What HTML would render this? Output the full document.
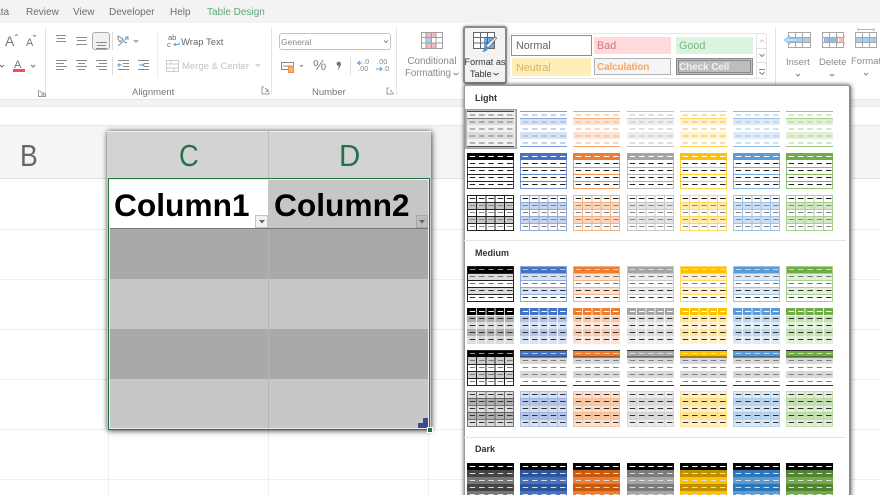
<!DOCTYPE html>
<html lang="en"><head><meta charset="utf-8"><title>Format as Table</title>
<style>
html,body{margin:0;padding:0;width:880px;height:495px;overflow:hidden;background:#fff;font-family:"Liberation Sans",sans-serif}
#p{position:relative;width:880px;height:495px;overflow:hidden;filter:blur(.35px)}
.a{position:absolute}
.t{position:absolute;white-space:nowrap;font-size:9.5px;line-height:12px;color:#6f6f6f}
.c{text-align:center}
svg{position:absolute;overflow:visible}
.k0{--c:#000;--f:#777;--d:#777;--a:#dcdcdc;--b:#b0b0b0;--e:#444;--m:#777;--g:#222;--h:#999}
.k1{--c:#4472c4;--f:#8eaadb;--d:#8ea9db;--a:#d9e2f3;--b:#b4c6e7;--e:#2f5597;--m:#4472c4;--g:#8eaadb;--h:#b4c6e7}
.k2{--c:#ed7d31;--f:#f4b183;--d:#f4b183;--a:#fbe4d5;--b:#f7caac;--e:#c55a11;--m:#ed7d31;--g:#f4b183;--h:#f7caac}
.k3{--c:#a5a5a5;--f:#c9c9c9;--d:#c0c0c0;--a:#ededed;--b:#dbdbdb;--e:#7b7b7b;--m:#a5a5a5;--g:#c9c9c9;--h:#dbdbdb}
.k4{--c:#ffc000;--f:#ffd966;--d:#e3c060;--a:#fff2cc;--b:#ffe599;--e:#bf9000;--m:#ffc000;--g:#ffd966;--h:#ffe599}
.k5{--c:#5b9bd5;--f:#9dc3e6;--d:#9dc3e6;--a:#deeaf6;--b:#bdd6ee;--e:#2e75b6;--m:#5b9bd5;--g:#9dc3e6;--h:#bdd6ee}
.k6{--c:#70ad47;--f:#a9d18e;--d:#a9d18e;--a:#e2efd9;--b:#c5e0b3;--e:#548235;--m:#70ad47;--g:#a9d18e;--h:#c5e0b3}
.dh{stroke-dasharray:5.5 3.83;stroke-width:1;fill:none}
</style></head><body><div id="p">

<!-- tab bar and ribbon -->
<div class="a" style="left:0;top:0;width:880px;height:23px;background:#f3f3f3"></div>
<div class="t" style="left:-12px;top:7px;font-size:10px">Data</div>
<div class="t" style="left:26px;top:7px;font-size:10px">Review</div>
<div class="t" style="left:73px;top:7px;font-size:10px">View</div>
<div class="t" style="left:109px;top:7px;font-size:10px">Developer</div>
<div class="t" style="left:170px;top:7px;font-size:10px">Help</div>
<div class="t" style="left:207px;top:7px;font-size:10px;color:#5fa67f">Table Design</div>
<div class="a" style="left:0;top:99px;width:880px;height:7px;background:#f3f3f3;border-top:1px solid #e6e6e6;box-sizing:border-box"></div>
<div class="a" style="left:0;top:106px;width:880px;height:1px;background:#ececec"></div>

<!-- separators -->
<div class="a" style="left:45px;top:27px;width:1px;height:68px;background:#e4e4e4"></div>
<div class="a" style="left:157px;top:32px;width:1px;height:46px;background:#ececec"></div>
<div class="a" style="left:271px;top:27px;width:1px;height:68px;background:#e4e4e4"></div>
<div class="a" style="left:396px;top:27px;width:1px;height:68px;background:#e4e4e4"></div>
<div class="a" style="left:775px;top:27px;width:1px;height:60px;background:#e4e4e4"></div>
<div class="a" style="left:112px;top:32px;width:1px;height:18px;background:#ddd"></div>
<div class="a" style="left:112px;top:57px;width:1px;height:18px;background:#ddd"></div>
<div class="a" style="left:350px;top:57px;width:1px;height:18px;background:#ddd"></div>

<!-- font group -->
<div class="t" style="left:5px;top:34px;font-size:14px;line-height:15px;color:#777">A</div>
<div class="t" style="left:26px;top:37px;font-size:11px;color:#777">A</div>
<svg style="left:0;top:0" width="60" height="90" fill="none" stroke-width="1">
<path d="M15 36l1.500-1.500 1.500 1.500" stroke="#7a9cc0"/><path d="M33 35l1.500 1.500 1.500-1.500" stroke="#7a9cc0"/>
<path d="M0 65l2 2 2-2M31 65l2 2 2-2" stroke="#777"/></svg>
<div class="t" style="left:14px;top:59px;font-size:11px;color:#777">A</div>
<div class="a" style="left:13px;top:69px;width:12px;height:3px;background:#f0505a"></div>
<svg style="left:36px;top:87px" width="10" height="10" fill="none" stroke="#999"><path d="M3.500 3.500h-1v6h7v-3M4 4l4 4M8 5v3H5"/></svg>

<!-- alignment group -->
<div class="a" style="left:92px;top:32px;width:18px;height:18px;border:1px solid #aaa;border-radius:3px;background:#f1f1f1;box-sizing:border-box"></div>
<svg style="left:0;top:0" width="270" height="100" fill="none" stroke="#8a8a8a" stroke-width="1">
<path d="M56 35.500h10M57 38.500h8M56 41.500h10"/>
<path d="M76 37.500h11M77 40.500h9M76 44.500h11"/>
<path d="M96 42.500h11M97 45.500h9M96 48.500h11"/>
<path d="M56 60.500h11M56 63.500h8M56 66.500h11M56 69.500h8"/>
<path d="M76 60.500h11M78 63.500h7M76 66.500h11M78 69.500h7"/>
<path d="M96 60.500h11M99 63.500h8M96 66.500h11M99 69.500h8"/>
<path d="M118 60.500h11M123 63.500h6M123 66.500h6M118 69.500h11" />
<path d="M138 60.500h11M144 63.500h5M144 66.500h5M138 69.500h11" />
<path d="M139 65h5m-1.500-1.500L144 65l-1.500 1.500" stroke="#5a9ed8"/>
<path d="M118 65h4m-2.500-1.500L118 65l1.500 1.500" stroke="#5a9ed8"/>
<path d="M118 46l10-9m-3 0h3v3" stroke="#5a9ed8"/>
<path d="M118 36l5 3-3 3-2-3zM124 42l3 1" stroke="#888"/>
<path d="M134 40l2 2 2-2" stroke="#777"/>
<path d="M256 64l2 2 2-2" stroke="#bbb"/>
<rect x="166.500" y="60.500" width="12" height="11" stroke="#ccc"/><path d="M166.500 64h12M166.500 68h12M171 60.500v3.500M174 68v3.500" stroke="#ccc"/>
<path d="M264 87h-2v7h7v-2M265 88l3 3M268 89v2.500h-2.500" stroke="#999" />
</svg>
<div class="t" style="left:168px;top:34px;font-size:7.500px;line-height:8px;color:#666">ab</div>
<div class="t" style="left:167px;top:41px;font-size:7.500px;line-height:8px;color:#666">c</div>
<svg style="left:173px;top:42px" width="7" height="6" fill="none" stroke="#5a9ed8"><path d="M6 .5v2H1m1.500-1.500L1 2.500 2.500 4"/></svg>
<div class="t" style="left:181px;top:36.500px;color:#666">Wrap Text</div>
<div class="t" style="left:182px;top:61px;color:#c2c2c2">Merge &amp; Center</div>
<div class="t" style="left:132px;top:87px;color:#777">Alignment</div>

<!-- number group -->
<div class="a" style="left:279px;top:33px;width:112px;height:17px;border:1px solid #c4c4c4;border-radius:3px;box-sizing:border-box"></div>
<div class="t" style="left:281px;top:35.500px;font-size:8.500px;color:#888">General</div>
<svg style="left:0;top:0" width="400" height="100" fill="none" stroke="#888">
<path d="M384 40.500l2 2 2-2"/>
<rect x="281.500" y="62.500" width="12" height="7"/><path d="M283 66h9"/>
<rect x="288.500" y="66.500" width="5" height="6" fill="#f2b27c" stroke="#e98f3d"/>
<path d="M300 65l1.500 1.500L303 65"/>
<path d="M357 63h5m-2-2l-2 2 2 2" stroke="#5a9ed8"/>
<path d="M376 69h6m-2-2l2 2-2 2" stroke="#5a9ed8"/>
<path d="M389 88h-2v6h6v-2M390 90l2 2" stroke="#999"/>
<path d="M336.500 63.500a2.300 2.300 0 1 1 4.300 1.500c-.5 2-1.800 4-3.500 5 1-1.500 1.500-2.800 1.400-4.200-1.200.2-2.200-.9-2.200-2.300z" fill="#777" stroke="none"/>
</svg>
<div class="t" style="left:313px;top:58px;font-size:15px;line-height:16px;color:#888">%</div>
<div class="t" style="left:363px;top:58px;font-size:7.500px;line-height:8px;color:#888">.0</div>
<div class="t" style="left:358px;top:65px;font-size:7.500px;line-height:8px;color:#888">.00</div>
<div class="t" style="left:377px;top:58px;font-size:7.500px;line-height:8px;color:#888">.00</div>
<div class="t" style="left:383px;top:65px;font-size:7.500px;line-height:8px;color:#888">.0</div>
<div class="t" style="left:312px;top:87px;color:#777">Number</div>

<!-- conditional formatting -->
<svg style="left:421px;top:32px" width="22" height="17">
<rect width="22" height="17" fill="#fff"/>
<rect x="4.500" y="0" width="10" height="5.500" fill="#f7b6bc"/>
<rect x="4.500" y="5.500" width="6" height="5.500" fill="#a9cdee"/>
<rect x="4.500" y="11" width="10" height="6" fill="#f7b6bc"/>
<path d="M.5.500h21v16H.5zM.5 5.500h21M.5 11h21M5 .5v16M10.500.5v16M15 .5v16" fill="none" stroke="#a0a0a0"/>
</svg>
<div class="t c" style="left:398px;width:68px;top:56px;color:#8a8a8a;font-size:9.800px">Conditional</div>
<div class="t" style="left:405px;top:68px;color:#8a8a8a;font-size:9.800px;letter-spacing:-.1px">Formatting</div>
<svg style="left:453px;top:72px" width="6" height="4" fill="none" stroke="#888"><path d="M.5 1L3 3l2.500-2"/></svg>

<!-- format as table -->
<div class="a" style="left:463px;top:26px;width:44px;height:58px;box-sizing:border-box;border:2px solid #8a8a8a;border-radius:3px;background:#f3f3f3;box-shadow:0 0 3px #999"></div>
<svg style="left:473px;top:32px" width="24" height="21">
<rect width="22" height="16" fill="#fff"/>
<rect x="11" y="5.500" width="11" height="11" fill="#6aaae6"/>
<path d="M.5.500h21v16H.5zM.5 5.500h21M.5 11h21M7.500.5v16M14.500.5v16" fill="none" stroke="#666"/>
<path d="M22.500 5l1.300 1.200-8.300 9.300-2.800-1.500z" fill="#fff" stroke="#777" stroke-width=".8"/>
<path d="M12.500 14l3 1.500c-.8 3-3.500 4.500-6.500 4.500 2-1.500 1.600-4 3.500-6z" fill="#4b93d8"/>
</svg>
<div class="t c" style="left:463px;width:44px;top:56px;color:#333;font-size:9.100px">Format as</div>
<div class="t" style="left:470px;top:68px;color:#333;font-size:9.100px">Table</div>
<svg style="left:493px;top:72px" width="6" height="4" fill="none" stroke="#444"><path d="M.5 1L3 3l2.500-2"/></svg>

<!-- styles gallery -->
<div class="a" style="left:509px;top:33px;width:258px;height:46px;border:1px solid #e6e6e6;border-radius:3px;box-sizing:border-box"></div>
<div class="a" style="left:511px;top:35px;width:81px;height:21px;background:#fff;border:1px solid #8f8f8f;box-sizing:border-box"></div>
<div class="t" style="left:516px;top:39.500px;font-size:10.800px;color:#666">Normal</div>
<div class="a" style="left:512px;top:58px;width:79px;height:18px;background:#feeeb8"></div>
<div class="t" style="left:516px;top:61.500px;font-size:10.800px;color:#d9b45d">Neutral</div>
<div class="a" style="left:594px;top:37px;width:77px;height:17px;background:#ffd9dc"></div>
<div class="t" style="left:597px;top:39.500px;font-size:10.800px;color:#d2767d">Bad</div>
<div class="a" style="left:594px;top:58px;width:77px;height:17px;background:#f5f5f5;border:1px solid #b2b2b2;box-sizing:border-box"></div>
<div class="t" style="left:597px;top:61.500px;font-size:10px;font-weight:bold;color:#f5a75c;letter-spacing:-.15px">Calculation</div>
<div class="a" style="left:676px;top:37px;width:77px;height:17px;background:#d9f5dd"></div>
<div class="t" style="left:679px;top:39.500px;font-size:10.800px;color:#84b384">Good</div>
<div class="a" style="left:676px;top:58px;width:77px;height:17px;background:#bdbdbd;border:3px double #8a8a8a;box-sizing:border-box"></div>
<div class="t" style="left:679px;top:61.500px;font-size:10px;font-weight:bold;color:#f2f2f2;letter-spacing:-.1px">Check Cell</div>
<div class="a" style="left:756px;top:33px;width:11px;height:46px;background:#fff;border:1px solid #e4e4e4;border-radius:3px;box-sizing:border-box"></div>
<div class="a" style="left:756px;top:48px;width:11px;height:1px;background:#ddd"></div>
<div class="a" style="left:756px;top:62px;width:11px;height:1px;background:#ddd"></div>
<svg style="left:757px;top:33px" width="10" height="46" fill="none" stroke="#888">
<path d="M2.500 9.500l2.500-2.500 2.500 2.500" stroke="#ccc"/><path d="M2.500 21l2.500 2.500 2.500-2.500"/><path d="M2 36.500h6M2.500 39l2.500 2.500L7.500 39"/></svg>

<!-- cells group -->
<svg style="left:783px;top:26px" width="97" height="26" fill="none">
<rect x="5" y="6" width="22" height="16" fill="#fff"/><rect x="5" y="11" width="23" height="6" fill="#a6cdf0"/>
<path d="M5.500 6.500h22v15h-22zM5.500 11.500h22M5.500 16.500h22M12.500 6.500v15M19.500 6.500v15" stroke="#a8a8a8"/>
<path d="M1.500 14l5-4v2.500h8v3h-8V18z" fill="#bfe0f8" stroke="#7fc0ee"/>
<rect x="40" y="6" width="21" height="16" fill="#fff"/><rect x="41" y="11" width="14" height="6" fill="#8fbde8"/>
<path d="M39.500 6.500h21v15h-21zM39.500 11.500h21M39.500 16.500h21M46.500 6.500v15M53.500 6.500v15" stroke="#a8a8a8"/>
<path d="M54 10l8 8M62 10l-8 8" stroke="#f5a9ae" stroke-width="1.300"/>
<rect x="72.500" y="11" width="21" height="6" fill="#a6cdf0"/>
<path d="M72.500 6.500h21v15h-21zM72.500 11.500h21M72.500 16.500h21M79.500 6.500v15M86.500 6.500v15" stroke="#a8a8a8"/>
<path d="M75 3.500h16M75 2v3M91 2v3" stroke="#8fc3ec"/>
</svg>
<div class="t" style="left:786px;top:57px;color:#8a8a8a">Insert</div>
<div class="t" style="left:819px;top:57px;color:#8a8a8a">Delete</div>
<div class="t" style="left:851px;top:56px;color:#8a8a8a">Format</div>
<svg style="left:780px;top:71px" width="100" height="8" fill="none" stroke="#888"><path d="M16 3l2 2 2-2M50 3l2 2 2-2M84 2l2 2 2-2"/></svg>

<!-- sheet -->
<div class="a" style="left:0;top:125px;width:880px;height:54px;background:#f5f5f5;border-top:1px solid #e8e8e8;border-bottom:1px solid #e2e2e2;box-sizing:border-box"></div>
<div class="a" style="left:0;top:229px;width:880px;height:1px;background:#eee"></div>
<div class="a" style="left:0;top:279px;width:880px;height:1px;background:#eee"></div>
<div class="a" style="left:0;top:329px;width:880px;height:1px;background:#eee"></div>
<div class="a" style="left:0;top:379px;width:880px;height:1px;background:#eee"></div>
<div class="a" style="left:0;top:429px;width:880px;height:1px;background:#eee"></div>
<div class="a" style="left:0;top:479px;width:880px;height:1px;background:#eee"></div>
<div class="a" style="left:108px;top:179px;width:1px;height:316px;background:#eee"></div>
<div class="a" style="left:268px;top:179px;width:1px;height:316px;background:#eee"></div>
<div class="a" style="left:428px;top:179px;width:1px;height:316px;background:#eee"></div>
<div class="t" style="left:20px;top:138px;font-size:31px;line-height:36px;color:#666;transform:scaleX(.86);transform-origin:0 0">B</div>

<!-- highlighted table -->
<div class="a" style="left:107px;top:131px;width:324px;height:299px;background:#c7c7c7;box-shadow:1px 1px 6px rgba(0,0,0,.55),0 0 4px rgba(0,0,0,.35)"></div>
<div class="a" style="left:107px;top:131px;width:324px;height:48px;background:#d3d3d3;box-shadow:inset 0 1px 0 #f0f0f0"></div>
<div class="a" style="left:268px;top:131px;width:1px;height:48px;background:#bdbdbd"></div>
<div class="t" style="left:179px;top:138px;font-size:31px;line-height:36px;color:#22734b;transform:scaleX(.88);transform-origin:0 0">C</div>
<div class="t" style="left:339px;top:138px;font-size:31px;line-height:36px;color:#22734b;transform:scaleX(.95);transform-origin:0 0">D</div>
<div class="a" style="left:109px;top:180px;width:159px;height:49px;background:#fff"></div>
<div class="a" style="left:268px;top:180px;width:160px;height:49px;background:#c6c6c6"></div>
<div class="a" style="left:109px;top:228px;width:319px;height:1px;background:#777"></div>
<div class="a" style="left:109px;top:229px;width:319px;height:50px;background:#a9a9a9"></div>
<div class="a" style="left:109px;top:279px;width:319px;height:50px;background:#c7c7c7"></div>
<div class="a" style="left:109px;top:329px;width:319px;height:50px;background:#a9a9a9"></div>
<div class="a" style="left:109px;top:379px;width:319px;height:50px;background:#c7c7c7"></div>
<div class="a" style="left:268px;top:229px;width:1px;height:200px;background:#b5b5b5"></div>
<div class="t" style="left:114px;top:186px;font-size:31.700px;line-height:38px;font-weight:bold;color:#000">Column1</div>
<div class="t" style="left:274px;top:186px;font-size:31.700px;line-height:38px;font-weight:bold;color:#000">Column2</div>
<div class="a" style="left:255px;top:215px;width:13px;height:13px;background:#f2f2f2;border:1px solid #c4c4c4;box-sizing:border-box"></div>
<div class="a" style="left:416px;top:215px;width:12px;height:13px;background:#bdbdbd;border:1px solid #a8a8a8;box-sizing:border-box"></div>
<svg style="left:255px;top:215px" width="175" height="13" fill="#666"><path d="M4 5h6L7 8.500zM164 5h6l-3 3.500z"/></svg>
<div class="a" style="left:107.500px;top:178px;width:322.500px;height:252px;border:1.500px solid #217346;box-sizing:border-box;box-shadow:inset 0 0 0 1px rgba(255,255,255,.7)"></div>
<svg style="left:418px;top:418px" width="10" height="10" fill="#3b4a93"><path d="M5 0h5v10H0V5h5z"/></svg>
<div class="a" style="left:426.500px;top:426.500px;width:4px;height:4px;background:#217346;border:1px solid #fff"></div>

<!-- popup -->
<div class="a" style="left:464px;top:85px;width:387px;height:420px;background:#fff;border:1px solid #9a9a9a;border-right:2px solid #8c8c8c;box-sizing:border-box;border-radius:2px 3px 0 0;box-shadow:1px 0 5px rgba(0,0,0,.4),-1px -1px 3px rgba(0,0,0,.3)"></div>
<div class="t" style="left:475px;top:92px;font-weight:bold;color:#333;font-size:9px">Light</div>
<div class="a" style="left:464px;top:240px;width:382px;height:1px;background:#e3e3e3"></div>
<div class="t" style="left:475px;top:247px;font-weight:bold;color:#333;font-size:9px">Medium</div>
<div class="a" style="left:464px;top:437px;width:382px;height:1px;background:#e3e3e3"></div>
<div class="t" style="left:475px;top:443px;font-weight:bold;color:#333;font-size:9px">Dark</div>
<div class="a" style="left:465px;top:109px;width:52px;height:40px;background:#f2f2f2;border:1px solid #a0a0a0;box-shadow:inset 0 0 0 1px #bbb;box-sizing:border-box"></div>

<svg style="left:0;top:0" width="880" height="495">
<defs>
<g id="L1"><rect y="7" width="47" height="7" fill="var(--a)"/><rect y="21" width="47" height="7" fill="var(--a)"/>
<path d="M0 .5h47M0 35.500h47" stroke="var(--c)" stroke-opacity=".7"/><path d="M0 7.500h47" stroke="var(--f)"/>
<path class="dh" d="M2.700 4H47M2.700 11H47M2.700 18H47M2.700 25H47M2.700 32H47" stroke="var(--d)"/></g>
<g id="L2"><rect width="47" height="7" fill="var(--c)"/>
<path d="M.5.500h46v35H.5z" fill="none" stroke="var(--c)" stroke-opacity=".75"/><path d="M0 14.500h47M0 21.500h47M0 28.500h47" stroke="var(--c)" stroke-opacity=".85"/>
<path class="dh" d="M2.700 3.500H47" stroke="#fff"/><path class="dh" d="M2.700 10.500H47M2.700 17.500H47M2.700 24.500H47M2.700 31.500H47" stroke="#222"/></g>
<g id="L3"><rect y="7" width="47" height="7" fill="var(--a)"/><rect y="21" width="47" height="7" fill="var(--a)"/>
<rect y="7" width="47" height="7" fill="var(--b)" fill-opacity=".5"/><rect y="21" width="47" height="7" fill="var(--b)" fill-opacity=".5"/>
<path d="M.5.500h46v35H.5zM0 7.500h47M0 14.500h47M0 21.500h47M0 28.500h47M9.500 0v36M19 0v36M28 0v36M37.500 0v36" fill="none" stroke="var(--g)"/>
<path class="dh" d="M2.700 3.500H47" stroke="#222"/><path class="dh" d="M2.700 10.500H47M2.700 17.500H47M2.700 24.500H47M2.700 31.500H47" stroke="#888"/></g>
<g id="M1"><rect width="47" height="7" fill="var(--c)"/><rect y="7" width="47" height="7" fill="var(--a)"/><rect y="21" width="47" height="7" fill="var(--a)"/>
<path d="M.5.500h46v35H.5zM0 7.500h47M0 14.500h47M0 21.500h47M0 28.500h47" fill="none" stroke="var(--g)"/>
<path class="dh" d="M2.700 3.500H47" stroke="var(--h)"/><path class="dh" d="M2.700 10.500H47M2.700 17.500H47" stroke="#777"/><path class="dh" d="M2.700 24.500H47M2.700 31.500H47" stroke="#333"/></g>
<g id="M2"><rect width="47" height="7" fill="var(--c)"/><rect y="7" width="47" height="7" fill="var(--b)"/><rect y="14" width="47" height="7" fill="var(--a)"/><rect y="21" width="47" height="7" fill="var(--b)"/><rect y="28" width="47" height="8" fill="var(--a)"/>
<path d="M9.500 0v36M19 0v36M28 0v36M37.500 0v36M0 7.500h47" stroke="#fff" stroke-opacity=".8"/>
<path class="dh" d="M2.700 3.500H47" stroke="#fff"/><path class="dh" d="M2.700 10.500H47M2.700 17.500H47M2.700 24.500H47M2.700 31.500H47" stroke="#333"/></g>
<g id="M3"><rect width="47" height="7" fill="var(--c)"/><rect y="7" width="47" height="7" fill="#d9d9d9"/><rect y="21" width="47" height="7" fill="#d9d9d9"/>
<path d="M0 .5h47M0 7h47M0 35.500h47" stroke="#333"/>
<path class="dh" d="M2.700 3.500H47" stroke="var(--h)"/><path class="dh" d="M2.700 10.500H47M2.700 17.500H47M2.700 24.500H47M2.700 31.500H47" stroke="#808080" stroke-width="1.300"/></g>
<g id="M3g"><rect width="47" height="7" fill="#000"/><rect y="7" width="47" height="7" fill="#ccc"/><rect y="21" width="47" height="7" fill="#ccc"/>
<path d="M.5.500h46v35H.5zM0 14.500h47M0 21.500h47M0 28.500h47M9.500 7v29M19 7v29M28 7v29M37.500 7v29" fill="none" stroke="#222"/>
<path class="dh" d="M2.700 3.500H47" stroke="#999"/><path class="dh" d="M2.700 10.500H47M2.700 17.500H47M2.700 24.500H47M2.700 31.500H47" stroke="#777"/></g>
<g id="M4"><rect width="47" height="36" fill="var(--a)"/><rect y="7" width="47" height="7" fill="var(--b)"/><rect y="21" width="47" height="7" fill="var(--b)"/>
<path d="M.5.500h46v35H.5zM0 7.500h47M0 14.500h47M0 21.500h47M0 28.500h47M9.500 0v36M19 0v36M28 0v36M37.500 0v36" fill="none" stroke="var(--g)" stroke-opacity=".55"/>
<path class="dh" d="M2.700 3.500H47M2.700 10.500H47M2.700 17.500H47M2.700 24.500H47M2.700 31.500H47" stroke="#333"/></g>
<g id="D1"><rect width="47" height="7" fill="#000"/><rect y="7" width="47" height="7" fill="var(--e)"/><rect y="14" width="47" height="7" fill="var(--m)"/><rect y="21" width="47" height="7" fill="var(--e)"/><rect y="28" width="47" height="8" fill="var(--m)"/>
<path class="dh" d="M2.700 3.500H47" stroke="#fff"/><path class="dh" d="M2.700 10.500H47M2.700 17.500H47M2.700 24.500H47M2.700 31.500H47" stroke="#ddd"/></g>
</defs>
<g class="k0"><use href="#L1" x="467" y="111"/><use href="#L2" x="467" y="153"/><use href="#L3" x="467" y="195"/><use href="#M1" x="467" y="266"/><use href="#M2" x="467" y="308"/><use href="#M3g" x="467" y="350"/><use href="#M4" x="467" y="391"/><use href="#D1" x="467" y="463"/></g>
<g class="k1"><use href="#L1" x="520" y="111"/><use href="#L2" x="520" y="153"/><use href="#L3" x="520" y="195"/><use href="#M1" x="520" y="266"/><use href="#M2" x="520" y="308"/><use href="#M3" x="520" y="350"/><use href="#M4" x="520" y="391"/><use href="#D1" x="520" y="463"/></g>
<g class="k2"><use href="#L1" x="573" y="111"/><use href="#L2" x="573" y="153"/><use href="#L3" x="573" y="195"/><use href="#M1" x="573" y="266"/><use href="#M2" x="573" y="308"/><use href="#M3" x="573" y="350"/><use href="#M4" x="573" y="391"/><use href="#D1" x="573" y="463"/></g>
<g class="k3"><use href="#L1" x="627" y="111"/><use href="#L2" x="627" y="153"/><use href="#L3" x="627" y="195"/><use href="#M1" x="627" y="266"/><use href="#M2" x="627" y="308"/><use href="#M3" x="627" y="350"/><use href="#M4" x="627" y="391"/><use href="#D1" x="627" y="463"/></g>
<g class="k4"><use href="#L1" x="680" y="111"/><use href="#L2" x="680" y="153"/><use href="#L3" x="680" y="195"/><use href="#M1" x="680" y="266"/><use href="#M2" x="680" y="308"/><use href="#M3" x="680" y="350"/><use href="#M4" x="680" y="391"/><use href="#D1" x="680" y="463"/></g>
<g class="k5"><use href="#L1" x="733" y="111"/><use href="#L2" x="733" y="153"/><use href="#L3" x="733" y="195"/><use href="#M1" x="733" y="266"/><use href="#M2" x="733" y="308"/><use href="#M3" x="733" y="350"/><use href="#M4" x="733" y="391"/><use href="#D1" x="733" y="463"/></g>
<g class="k6"><use href="#L1" x="786" y="111"/><use href="#L2" x="786" y="153"/><use href="#L3" x="786" y="195"/><use href="#M1" x="786" y="266"/><use href="#M2" x="786" y="308"/><use href="#M3" x="786" y="350"/><use href="#M4" x="786" y="391"/><use href="#D1" x="786" y="463"/></g>
</svg>
</div></body></html>
